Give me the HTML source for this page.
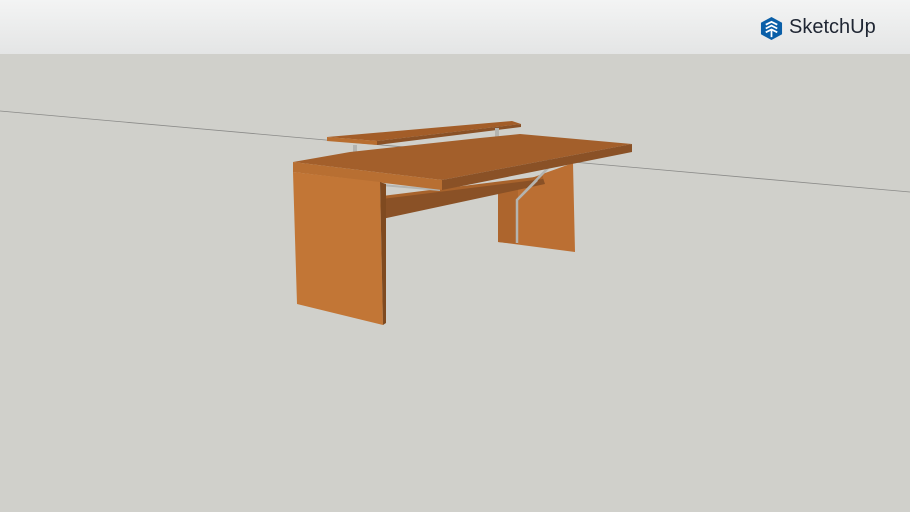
<!DOCTYPE html>
<html><head><style>
html,body{margin:0;padding:0;width:910px;height:512px;overflow:hidden;background:#d0d0cb;}
.top{position:absolute;left:0;top:0;width:910px;height:54px;background:linear-gradient(#f3f4f4,#e4e5e5);}
.logo{position:absolute;left:760px;top:16px;}
.txt{position:absolute;left:789px;top:16px;font:400 20px "Liberation Sans",sans-serif;color:#1f2633;letter-spacing:0px;}
svg.s{position:absolute;left:0;top:0;}
</style></head><body>
<div class="top"></div>
<svg class="logo" width="23" height="25" viewBox="0 0 24 26">
<path d="M12 1 L23 7 L23 19 L12 25 L1 19 L1 7 Z" fill="#0a5fa8"/>
<path d="M6 9 L12 6 L18 9 M6 13 L12 10 L18 13 M6 17 L12 14 L18 17 M12 14 V22" stroke="#fff" stroke-width="1.8" fill="none"/>
</svg>
<div class="txt">SketchUp</div>
<svg class="s" width="910" height="512">
<line x1="0" y1="111" x2="910" y2="192" stroke="#8a8a88" stroke-width="0.8"/>
<polygon points="327,137 512,121 521,124 377,141" fill="#a35d28"/>
<polygon points="327,137 377,141 377,145 327,141" fill="#b86e30"/>
<polygon points="377,141 521,124 521,127 377,145" fill="#8a5126"/>
<rect x="353" y="145" width="4" height="14" fill="#b4b4b0"/>
<rect x="495" y="128" width="4" height="11" fill="#b4b4b0"/>
<polygon points="498,190 573,163 575,252 498,242" fill="#bb6f33"/>
<polygon points="498,190 518,183 518,244 498,242" fill="#ad652d"/>
<polygon points="382,198 543,178 545,184 382,219" fill="#8a5126"/>
<polygon points="382,196 543,176 543,179 382,199" fill="#a8632c"/>
<line x1="381" y1="185" x2="440" y2="190" stroke="#b4b4b0" stroke-width="2"/>
<path d="M517 243 V200 L548 168 M517 200 L537 180" stroke="#b4b4b0" stroke-width="2.5" fill="none"/>
<polygon points="293,162 350,152 480,138 520,134 632,144 442,180" fill="#a35f2b"/>
<polygon points="293,162 442,180 442,190 293,172" fill="#b86f32"/>
<polygon points="442,180 632,144 632,152 442,190" fill="#8a5126"/>
<polygon points="293,172 380,182 383,325 297,304" fill="#c27636"/>
<polygon points="380,182 386,184 386,323 383,325" fill="#7f4a20"/>
</svg>
</body></html>
